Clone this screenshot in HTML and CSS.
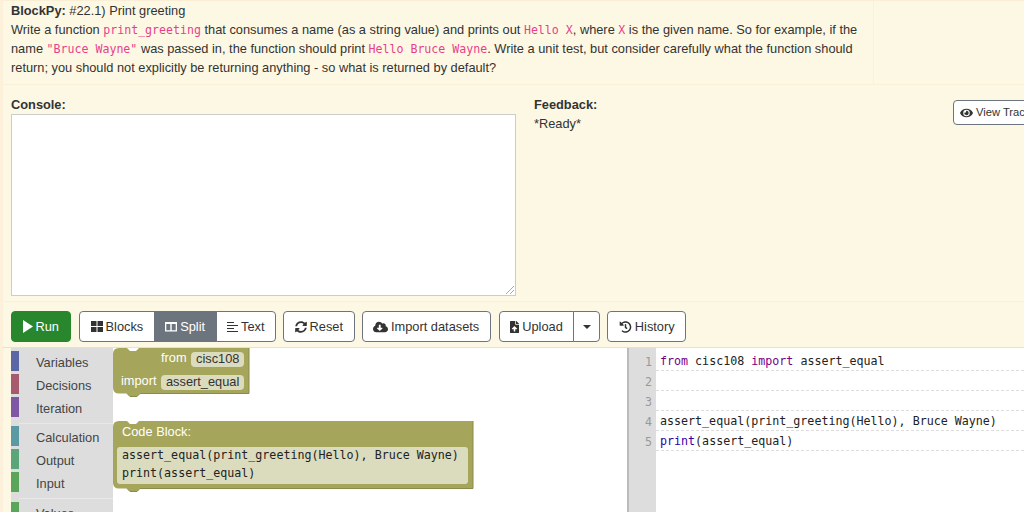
FILE: index.html
```html
<!DOCTYPE html>
<html lang="en">
<head>
<meta charset="utf-8">
<title>BlockPy</title>
<link rel="stylesheet" href="styles.css">
</head>
<body>
<div class="page">
  <section class="problem">
    <div class="desc">
      <div><b>BlockPy:</b> #22.1) Print greeting</div>
      <div>Write a function <code>print_greeting</code> that consumes a name (as a string value) and prints out <code>Hello X</code>, where <code>X</code> is the given name. So for example, if the name <code>"Bruce Wayne"</code> was passed in, the function should print <code>Hello Bruce Wayne</code>. Write a unit test, but consider carefully what the function should return; you should not explicitly be returning anything - so what is returned by default?</div>
    </div>
    <div class="side"></div>
  </section>
  <section class="console-row">
    <div class="console">
      <b class="label">Console:</b>
      <div class="textarea"><svg class="grip" width="8" height="8" viewBox="0 0 8 8"><path d="M0 8L8 0M4 8L8 4" stroke="#aaa" fill="none"/></svg></div>
    </div>
    <div class="feedback">
      <b class="label">Feedback:</b>
      <div>*Ready*</div>
    </div>
    <button class="btn trace"><svg class="ic" width="13" height="12" viewBox="0 0 576 512"><path fill="#333" d="M572.52 241.4C518.29 135.59 410.93 64 288 64S57.68 135.64 3.48 241.41a32.35 32.35 0 0 0 0 29.19C57.71 376.41 165.07 448 288 448s230.32-71.64 284.52-177.41a32.35 32.35 0 0 0 0-29.19zM288 400a144 144 0 1 1 144-144 143.93 143.93 0 0 1-144 144zm0-240a95.31 95.31 0 0 0-25.31 3.79 47.85 47.85 0 0 1-66.9 66.9A95.78 95.78 0 1 0 288 160z"/></svg>View Trace</button>
  </section>
  <nav class="toolbar">
    <button class="btn run"><svg class="ic" width="10" height="13" viewBox="0 0 11 13" preserveAspectRatio="none"><path d="M0 0L11 6.500L0 13z" fill="#fff"/></svg>Run</button>
    <div class="group">
      <button class="btn"><svg class="ic" width="12" height="11" viewBox="0 0 12 11"><path d="M0 0h5.500v5H0zM6.500 0H12v5H6.500zM0 6h5.500v5H0zM6.500 6H12v5H6.500z" fill="#333"/></svg>Blocks</button>
      <button class="btn active"><svg class="ic" width="12" height="11" viewBox="0 0 12 11"><path fill-rule="evenodd" d="M0 1h12v9.500H0zM1.300 3v6.200h4V3zM6.700 3v6.200h4V3z" fill="#fff"/></svg>Split</button>
      <button class="btn"><svg class="ic" width="11" height="11" viewBox="0 0 11 11"><path d="M0 1.500h7M0 4.500h11M0 7.500h7M0 10.500h11" stroke="#333" fill="none"/></svg>Text</button>
    </div>
    <button class="btn"><svg class="ic" width="12" height="12" viewBox="0 0 512 512"><path fill="#333" d="M370.72 133.28C339.458 104.008 298.888 87.962 255.848 88c-77.458.068-144.328 53.178-162.791 126.85-1.344 5.363-6.122 9.15-11.651 9.15H24.103c-7.498 0-13.194-6.807-11.807-14.176C33.933 94.924 134.813 8 256 8c66.448 0 126.791 26.136 171.315 68.685L463.03 40.97C478.149 25.851 504 36.559 504 57.941V192c0 13.255-10.745 24-24 24H345.941c-21.382 0-32.09-25.851-16.971-40.971l41.75-41.749zM32 296h134.059c21.382 0 32.09 25.851 16.971 40.971l-41.75 41.75c31.262 29.273 71.835 45.319 114.876 45.28 77.418-.07 144.315-53.144 162.787-126.849 1.344-5.363 6.122-9.15 11.651-9.15h57.304c7.498 0 13.194 6.807 11.807 14.176C478.067 417.076 377.187 504 256 504c-66.448 0-126.791-26.136-171.315-68.685L48.97 471.03C33.851 486.149 8 475.441 8 454.059V320c0-13.255 10.745-24 24-24z"/></svg>Reset</button>
    <button class="btn"><svg class="ic" width="15" height="12" viewBox="0 0 640 512"><path fill="#333" d="M537.6 226.6c4.1-10.7 6.4-22.4 6.4-34.6 0-53-43-96-96-96-19.7 0-38.1 6-53.3 16.2C367 64.2 315.3 32 256 32c-88.4 0-160 71.6-160 160 0 2.7.1 5.4.2 8.1C40.2 219.8 0 273.2 0 336c0 79.5 64.5 144 144 144h368c70.7 0 128-57.3 128-128 0-61.9-44-113.6-102.4-125.4zm-132.9 88.7L299.3 420.7c-6.2 6.2-16.4 6.2-22.6 0L171.3 315.3c-10.1-10.1-2.9-27.3 11.3-27.3H248V176c0-8.8 7.2-16 16-16h48c8.8 0 16 7.2 16 16v112h65.4c14.2 0 21.4 17.2 11.3 27.3z"/></svg>Import datasets</button>
    <div class="group upload">
      <button class="btn"><svg class="ic" width="9" height="12" viewBox="0 0 384 512"><path fill="#333" d="M224 136V0H24C10.7 0 0 10.7 0 24v464c0 13.3 10.7 24 24 24h336c13.3 0 24-10.7 24-24V160H248c-13.2 0-24-10.8-24-24zm65.18 216.01H224v80c0 8.84-7.16 16-16 16h-32c-8.84 0-16-7.16-16-16v-80H94.82c-14.28 0-21.41-17.29-11.27-27.36l96.42-95.7c6.65-6.61 17.39-6.61 24.04 0l96.42 95.7c10.15 10.07 3.03 27.36-11.25 27.36zM377 105L279.1 7c-4.5-4.5-10.6-7-17-7H256v128h128v-6.1c0-6.3-2.5-12.4-7-16.9z"/></svg>Upload</button>
      <button class="btn caret"><svg width="8" height="4" viewBox="0 0 8 4"><path d="M0 0H8L4 4z" fill="#333"/></svg></button>
    </div>
    <button class="btn"><svg class="ic" width="13" height="12" viewBox="0 0 512 512"><path fill="#333" d="M504 255.531c.253 136.64-111.18 248.372-247.82 248.468-59.015.042-113.223-20.53-155.822-54.911-11.077-8.94-11.905-25.541-1.839-35.607l11.267-11.267c8.609-8.609 22.353-9.551 31.891-1.984C173.062 425.135 212.781 440 256 440c101.705 0 184-82.311 184-184 0-101.705-82.311-184-184-184-48.814 0-93.149 18.969-126.068 49.932l50.754 50.754c10.08 10.08 2.941 27.314-11.313 27.314H24c-8.837 0-16-7.163-16-16V38.627c0-14.254 17.234-21.393 27.314-11.314l49.372 49.372C129.209 34.136 189.552 8 256 8c136.81 0 247.747 110.78 248 247.531zm-180.912 78.784l9.823-12.63c8.138-10.463 6.253-25.542-4.21-33.679L288 256.349V152c0-13.255-10.745-24-24-24h-16c-13.255 0-24 10.745-24 24v135.651l65.409 50.874c10.463 8.137 25.541 6.253 33.679-4.21z"/></svg>History</button>
  </nav>
  <section class="editor">
    <aside class="toolbox">
      <div class="cat"><i class="sw c1"></i>Variables</div>
      <div class="cat"><i class="sw c2"></i>Decisions</div>
      <div class="cat"><i class="sw c3"></i>Iteration</div>
      <hr class="sep">
      <div class="cat"><i class="sw c4"></i>Calculation</div>
      <div class="cat"><i class="sw c5"></i>Output</div>
      <div class="cat"><i class="sw c6"></i>Input</div>
      <hr class="sep sep-last">
      <div class="cat"><i class="sw c6"></i>Values</div>
    </aside>
    <div class="canvas">
      <svg class="blocks" width="515" height="164" viewBox="0 0 515 164">
        <path class="shape" d="M0 6Q0 0 6 0H14L17 3H23L26 0H136V45.500H27L24 48.500H17L14 45.500H6Q0 45.500 0 39.500z"/>
        <path class="edge" d="M136 0V45.500H27L24 48.500H17L14 45.500"/>
        <rect class="field" x="78" y="4" width="53" height="15" rx="4"/>
        <rect class="field" x="48" y="27" width="83" height="15" rx="4"/>
        <text class="bl" x="48" y="14">from</text>
        <text class="bl" x="8" y="37">import</text>
        <text class="fd" x="83" y="15">cisc108</text>
        <text class="fd" x="53" y="38">assert_equal</text>
        <path class="shape" d="M0 79Q0 73 6 73H14L17 76H23L26 73H360V140.500H27L24 143.500H17L14 140.500H6Q0 140.500 0 134.500z"/>
        <path class="edge" d="M360 73V140.500H27L24 143.500H17L14 140.500"/>
        <rect class="field" x="4" y="99" width="351" height="37" rx="3"/>
        <text class="bl" x="9" y="88">Code Block:</text>
        <text class="mono" x="9" y="111">assert_equal(print_greeting(Hello), Bruce Wayne)</text>
        <text class="mono" x="9" y="129">print(assert_equal)</text>
      </svg>
    </div>
    <div class="code">
      <div class="gutter"><div>1</div><div>2</div><div>3</div><div>4</div><div>5</div></div>
      <div class="lines">
        <div class="line"><span class="kw">from</span> cisc108 <span class="kw">import</span> assert_equal</div>
        <div class="line"></div>
        <div class="line"></div>
        <div class="line">assert_equal(print_greeting(Hello), Bruce Wayne)</div>
        <div class="line"><span class="bi">print</span>(assert_equal)</div>
      </div>
    </div>
  </section>
</div>
</body>
</html>
```
FILE: styles.css
```css
* { box-sizing: border-box; }
html, body { margin: 0; height: 100%; overflow: hidden; }
body { width: 1024px; height: 512px; font-family: "Liberation Sans", Arial, sans-serif; font-size: 12.8px; line-height: 19px; color: #333; }
.page { width: 1024px; height: 512px; background: #fdf8e3; border-top: 1px solid #fbeed5; border-left: 3px solid #fdf1dc; overflow: hidden; }
code { font-family: "DejaVu Sans Mono", monospace; font-size: 11.6px; line-height: 1; color: #e83e8c; }
.problem { display: flex; height: 84px; border-bottom: 1px solid #fbf0d8; }
.desc { width: 871px; padding: 0 8px; border-right: 1px solid #fbf0d8; }
.side { flex: 1; }
.console-row { display: flex; height: 217px; padding: 10px 0 0 8px; border-bottom: 1px solid #fbf0d8; }
.console { width: 505px; flex: none; }
.label { display: block; line-height: 19px; }
.textarea { width: 505px; height: 182px; background: #fff; border: 1px solid #ccc; position: relative; }
.grip { position: absolute; right: 1px; bottom: 1px; }
.feedback { margin-left: 18px; width: 419px; flex: none; }
.btn { display: inline-flex; align-items: center; font: inherit; color: #333; height: 31px; padding: 0 10.5px; background: #fff; border: 1px solid #6c757d; border-radius: 4px; white-space: nowrap; }
.ic { margin-right: 3px; flex: none; }
.trace { height: 25px; margin-top: 5px; padding: 0 6px; font-size: 11.2px; flex: none; }
.toolbar { display: flex; gap: 7px; height: 46px; padding: 9px 0 0 8px; border-bottom: 1px solid #e6e2d0; }
.run { background: #28862d; border-color: #28862d; color: #fff; width: 60px; margin-right: 1px; }
.group { display: flex; }
.upload { margin-left: 1px; }
.group .btn { border-radius: 0; margin-left: -1px; }
.group .btn:first-child { border-radius: 4px 0 0 4px; margin-left: 0; }
.group .btn:last-child { border-radius: 0 4px 4px 0; }
.active { background: #6c757d; color: #fff; }
.group .caret { width: 27px; justify-content: center; padding: 0; }
.editor { display: flex; height: 164px; margin-left: 8px; }
.toolbox { width: 102px; flex: none; background: #ddd; padding-top: 3px; }
.cat { display: flex; align-items: flex-start; height: 23px; color: #444; font-size: 12.8px; line-height: 24px; }
.sw { display: block; width: 8px; height: 20px; margin-right: 17px; }
.c1 { background: #5b67a5; } .c2 { background: #a55b6d; } .c3 { background: #7e57a5; }
.c4 { background: #5b9aa5; } .c5 { background: #5ba57a; } .c6 { background: #5ba55b; }
.sep { border: 0; border-top: 1px solid #e8e8e8; margin: 3px 0 2px 8px; }
.sep-last { margin-bottom: 3px; }
.canvas { width: 514px; flex: none; background: #fff; position: relative; }
.blocks { position: absolute; left: 0; top: 0; overflow: visible; }
.shape { fill: #a5a55b; }
.edge { fill: none; stroke: #8a8a4c; stroke-width: 1; }
.field { fill: #dbdbbd; }
.bl { font: 12.8px "Liberation Sans", sans-serif; fill: #fff; }
.fd { font: 12.8px "Liberation Sans", sans-serif; fill: #333; }
.mono { font: 11.67px "DejaVu Sans Mono", monospace; fill: #222; }
.code { display: flex; flex: 1; border-left: 2px solid #bbb; font: 11.67px/19.9px "DejaVu Sans Mono", monospace; color: #222; background: #fff; }
.gutter { width: 27px; flex: none; background: #ddd; color: #999; text-align: right; padding: 5px 4px 0 0; }
.lines { flex: 1; padding-top: 3px; }
.line { height: 20px; padding: 1px 0 0 4px; border-bottom: 1px dashed #ddd; white-space: pre; }
.kw { color: #708; } .bi { color: #30a; }
```
